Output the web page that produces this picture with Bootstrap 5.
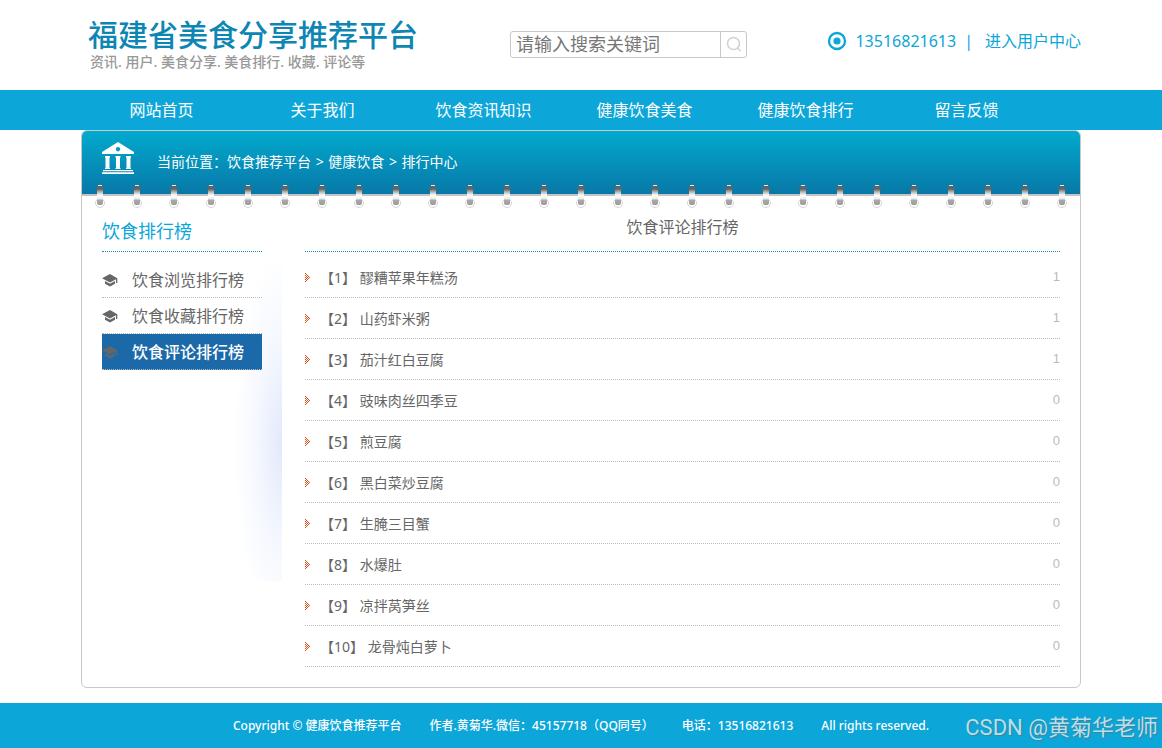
<!DOCTYPE html>
<html lang="zh-CN">
<head>
<meta charset="utf-8">
<meta name="viewport" content="width=device-width, initial-scale=1">
<title>福建省美食分享推荐平台</title>
<link href="https://cdn.jsdelivr.net/npm/bootstrap@5.3.0/dist/css/bootstrap.min.css" rel="stylesheet">
<style>
:root { --sky: #0ca6d9; --ink: #666; }
body { font-family: "Noto Sans", "Noto Sans CJK SC", sans-serif; font-size: 14px; line-height: 20px; color: var(--ink); background: #fff; }
a { text-decoration: none; color: inherit; }
.wrap { width: 100%; max-width: 1000px; margin: 0 auto; }
.site-head { min-height: 90px; padding-left: 7px; }
.brand-name { font-size: 30px; line-height: 34px; font-weight: 500; color: #0e86b3; margin: 0; }
.brand-sub { font-size: 14px; line-height: 20px; font-weight: 500; color: #999; margin: 0 0 0 2px; }
.search { width: 237px; height: 27px; margin: 0 0 2px 92px; border: 1px solid #c8c8c8; border-radius: 3px; }
.search input { border: 0; padding: 0 5px; font-size: 18px; line-height: 25px; color: #777; width: 0; outline-color: var(--sky); }
.search input::placeholder { color: #777; opacity: 1; }
.search button { width: 26px; flex: none; border: 0; border-left: 1px solid #c8c8c8; background: none; padding: 0; }
.contact { font-size: 16px; color: var(--sky); margin-bottom: 8px; }
.main-nav { background: var(--sky); }
.main-nav .nav-link { width: 161px; padding: 0; line-height: 40px; font-size: 16px; color: #fff; text-align: center; }
.panel { border: 1px solid #c8c8c8; border-radius: 6px; min-height: 558px; }
.panel-head { height: 65px; border-radius: 5px 5px 0 0; border-bottom: 2px solid #c4c4c4; background: linear-gradient(#02aace, #0878a8); color: #fff; padding: 0 0 2px 20px; }
.crumbs { margin: 0 0 0 23px; }
.crumbs span { margin: 0 1px; }
.rings { left: 0; top: 54px; width: 100%; height: 24px; }
.side { width: 200px; min-height: 385px; flex: none; padding: 19px 20px 0;
  background: radial-gradient(ellipse 48px 190px at 100% 58%, #e2e9fb, #f5f8fe 55%, #fff) no-repeat right bottom / 48px 330px; }
.side h2 { font-size: 18px; line-height: 32px; color: var(--sky); font-weight: 400; margin: 0 0 10px; padding-bottom: 4px; border-bottom: 1px dotted #1790ae; }
.side .nav-link { display: flex; align-items: center; gap: 14px; height: 36px; padding: 0; font-size: 16px; color: var(--ink); border-bottom: 1px dotted #bbb; }
.side .nav-link.active { background: #1c69aa; color: #fff; font-weight: 500; }
.board { margin: 0 20px 20px 23px; min-width: 0; }
.board h1 { font-size: 16px; line-height: 24px; font-weight: 400; text-align: center; margin: 0 0 5px; padding: 19px 0 12px; border-bottom: 1px dotted #1790ae; }
.rank li { height: 41px; border-bottom: 1px dotted #bbb; }
.rank .name { margin-left: 10px; padding-top: 2px; }
.rank .hits { font-family: "Liberation Sans", sans-serif; font-size: 13px; color: #bbb; }
.foot { background: var(--sky); color: #fff; min-height: 45px; margin-top: 15px; font-size: 12px; font-weight: 500; gap: 28px; }
.watermark { right: 4px; bottom: 4px; font: 22px/32px Roboto, "Noto Sans CJK SC", sans-serif; color: #b9dfec; text-shadow: 1px 1px 1px #4a7f93; white-space: nowrap; }
</style>
</head>
<body>
<header class="wrap site-head d-flex align-items-center">
  <div>
    <p class="brand-name text-nowrap">福建省美食分享推荐平台</p>
    <p class="brand-sub text-nowrap">资讯. 用户. 美食分享. 美食排行. 收藏. 评论等</p>
  </div>
  <form class="search d-flex" role="search" onsubmit="return false">
    <input class="flex-grow-1 bg-transparent" type="text" placeholder="请输入搜索关键词" aria-label="请输入搜索关键词">
    <button type="submit" class="d-flex align-items-center justify-content-center" aria-label="搜索">
      <svg width="16" height="16" fill="none" stroke="#d2d2d2" stroke-width="1.6"><circle cx="7.5" cy="7.5" r="6"/><path d="M11.5 12l3 3"/></svg>
    </button>
  </form>
  <div class="contact d-flex align-items-center ms-auto text-nowrap">
    <svg class="me-2" width="20" height="20"><circle cx="10" cy="10" r="8" fill="none" stroke="#0ca6d9" stroke-width="2.3"/><circle cx="10" cy="10" r="3.6" fill="#0ca6d9"/></svg>
    <span>13516821613</span><span class="mx-2">|</span><a class="ms-1" href="#">进入用户中心</a>
  </div>
</header>
<nav class="main-nav">
  <div class="wrap nav flex-nowrap">
    <a class="nav-link" href="#">网站首页</a>
    <a class="nav-link" href="#">关于我们</a>
    <a class="nav-link" href="#">饮食资讯知识</a>
    <a class="nav-link" href="#">健康饮食美食</a>
    <a class="nav-link" href="#">健康饮食排行</a>
    <a class="nav-link" href="#">留言反馈</a>
  </div>
</nav>
<main class="wrap panel position-relative">
  <div class="panel-head d-flex align-items-center">
    <svg class="mb-2" width="32" height="32" fill="#fff"><path fill-rule="evenodd" d="M16 0L32 10v2H0v-2zM16 5a2.2 2.2 0 1 0 .01 0z"/><path d="M3 14h5v1.500H7.500V26h.5v1H3v-1h.5V15.500H3zM13.500 14h5v1.500H18V26h.5v1h-5v-1h.5V15.500h-.5zM24 14h5v1.500h-.5V26h.5v1h-5v-1h.5V15.500H24zM1 28h30v1.300H1zM0 30.200h32V32H0z"/></svg>
    <p class="crumbs">当前位置：<a href="#">饮食推荐平台</a><span> &gt; </span><a href="#">健康饮食</a><span> &gt; </span><a href="#">排行中心</a></p>
  </div>
  <svg class="rings position-absolute" aria-hidden="true">
    <defs>
      <linearGradient id="wire" x2="0" y2="1"><stop offset="0" stop-color="#666"/><stop offset=".2" stop-color="#bbb"/><stop offset=".4" stop-color="#fff"/><stop offset=".6" stop-color="#eee"/><stop offset=".7" stop-color="#aaa"/><stop offset="1" stop-color="#999"/></linearGradient>
      <pattern id="ring" width="37" height="24" patternUnits="userSpaceOnUse">
        <circle cx="18" cy="4" r="3.800" fill="#5c6567"/><path d="M16 .5h4" stroke="#e4eef2"/>
        <circle cx="18" cy="18" r="4.500" fill="#fff" stroke="#d5d5d5"/>
        <rect x="15" y="4" width="6" height="16" rx="2" fill="url(#wire)"/>
      </pattern>
    </defs>
    <rect width="100%" height="24" fill="url(#ring)"/>
  </svg>
  <svg class="d-none" aria-hidden="true">
    <symbol id="cap" viewBox="0 0 16 14"><path fill="#666" d="M8 1L0 5.200 8 9.500l6-3.200V10h1.300V5.200zM3 8v2.800L8 13.500l5-2.700V8l-5 2.700z"/></symbol>
    <symbol id="tip" viewBox="0 0 5 9"><path fill="#e2501a" shape-rendering="crispEdges" d="M0 0h1v1H0zM0 2h1v1H0zM0 4h1v1H0zM0 6h1v1H0zM0 8h1v1H0zM1 1h1v1H1zM1 3h1v1H1zM1 5h1v1H1zM1 7h1v1H1zM2 2h1v1H2zM2 4h1v1H2zM2 6h1v1H2zM3 3h1v1H3zM3 5h1v1H3zM4 4h1v1H4z"/></symbol>
  </svg>
  <div class="d-flex align-items-start">
    <aside class="side">
      <h2>饮食排行榜</h2>
      <nav class="nav flex-column">
        <a class="nav-link" href="#"><svg width="16" height="14"><use href="#cap"/></svg>饮食浏览排行榜</a>
        <a class="nav-link" href="#"><svg width="16" height="14"><use href="#cap"/></svg>饮食收藏排行榜</a>
        <a class="nav-link active" href="#" aria-current="page"><svg width="16" height="14"><use href="#cap"/></svg>饮食评论排行榜</a>
      </nav>
    </aside>
    <section class="board flex-grow-1">
      <h1>饮食评论排行榜</h1>
      <ol class="rank list-unstyled m-0" id="rank"></ol>
    </section>
  </div>
</main>
<footer class="foot position-relative d-flex align-items-center justify-content-center text-nowrap">
  <span>Copyright © 健康饮食推荐平台</span>
  <span>作者.黄菊华.微信：45157718（QQ同号）</span>
  <span>电话：13516821613</span>
  <span>All rights reserved.</span>
  <span class="watermark position-absolute">CSDN @黄菊华老师</span>
</footer>
<script src="https://cdn.jsdelivr.net/npm/bootstrap@5.3.0/dist/js/bootstrap.bundle.min.js"></script>
<script>
const dishes = [["醪糟苹果年糕汤",1],["山药虾米粥",1],["茄汁红白豆腐",1],["豉味肉丝四季豆",0],["煎豆腐",0],["黑白菜炒豆腐",0],["生腌三目蟹",0],["水爆肚",0],["凉拌莴笋丝",0],["龙骨炖白萝卜",0]];
document.getElementById("rank").innerHTML = dishes.map(([name, hits], i) =>
  `<li class="d-flex align-items-center"><svg width="5" height="9"><use href="#tip"/></svg><a class="name" href="#">【${i + 1}】 ${name}</a><span class="hits ms-auto">${hits}</span></li>`).join("");
</script>
</body>
</html>
